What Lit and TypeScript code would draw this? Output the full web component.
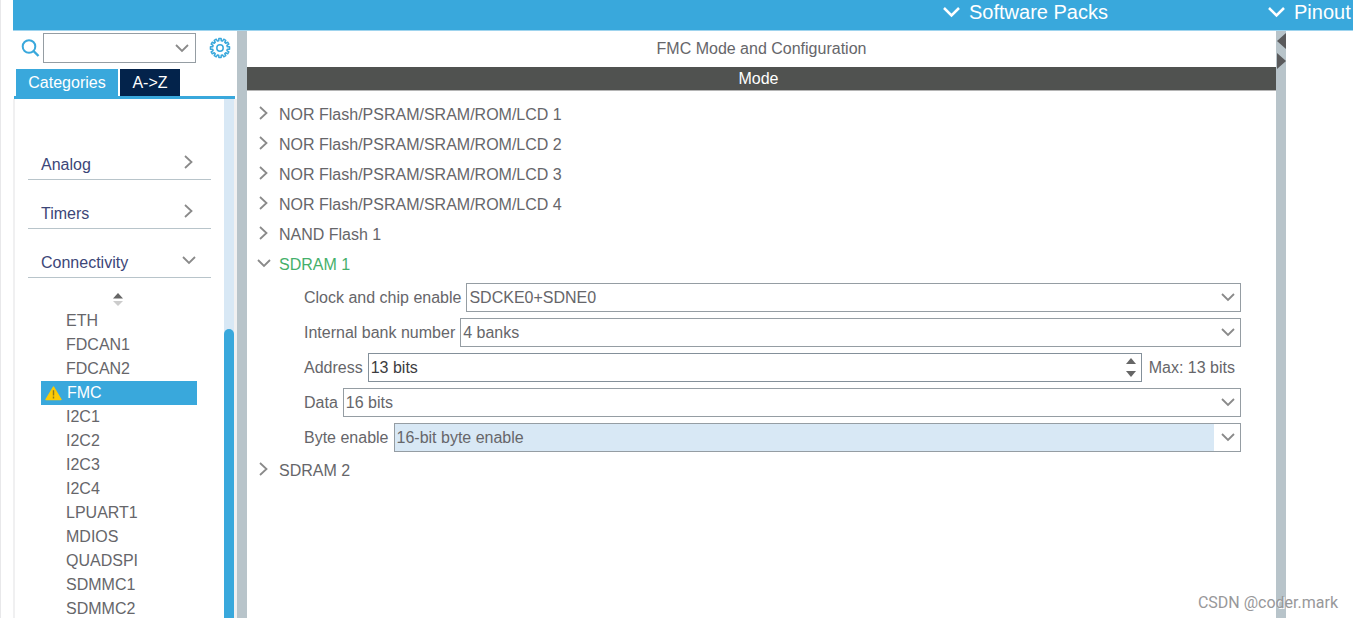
import { LitElement, html, css, svg, nothing } from "lit";
import { customElement, property } from "lit/decorators.js";
import { classMap } from "lit/directives/class-map.js";

type Direction = "right" | "down";

const chevron = (dir: Direction) => html`
  <svg class="chevron" width="14" height="14" viewBox="0 0 14 14" fill="none" stroke="currentColor" stroke-width="1.8" aria-hidden="true">
    ${dir === "right" ? svg`<path d="M3 1 L9.5 7 L3 13" />` : svg`<path d="M1 4 L7 10 L13 4" />`}
  </svg>
`;

const gearOutline = (): string => {
  const teeth = 12;
  const points: string[] = [];
  for (let i = 0; i < teeth; i++) {
    const mid = (i * 2 * Math.PI) / teeth;
    const corners: [number, number][] = [[7.4, -0.17], [9.6, -0.12], [9.6, 0.12], [7.4, 0.17]];
    for (const [r, offset] of corners) {
      points.push(`${(11 + r * Math.cos(mid + offset)).toFixed(2)} ${(11 + r * Math.sin(mid + offset)).toFixed(2)}`);
    }
  }
  return `M${points.join("L")}Z`;
};

@customElement("combo-field")
export class ComboField extends LitElement {
  @property() label = "";
  @property() value = "";
  @property({ type: Boolean }) highlighted = false;

  static styles = css`
    :host { display: block; }
    .row { display: flex; align-items: center; gap: 5px; }
    .box { position: relative; flex: 1; min-width: 0; color: #8a8a8a; }
    select {
      appearance: none;
      display: block;
      box-sizing: border-box;
      width: 100%;
      height: 29px;
      margin: 0;
      padding: 0 28px 0 2px;
      border: 1px solid #959da3;
      border-radius: 0;
      background: #fff;
      color: #66666a;
      font: inherit;
      outline: none;
    }
    .highlighted select { background: linear-gradient(to left, #fff 26px, #d8e8f5 26px); }
    .chevron { position: absolute; right: 6px; top: 7px; pointer-events: none; }
  `;

  render() {
    return html`
      <div class="row">
        <label for="field">${this.label}</label>
        <div class=${classMap({ box: true, highlighted: this.highlighted })}>
          <select id="field"><option>${this.value}</option></select>
          ${chevron("down")}
        </div>
      </div>
    `;
  }
}

@customElement("spin-field")
export class SpinField extends LitElement {
  @property() label = "";
  @property() value = "";
  @property() hint = "";

  static styles = css`
    :host { display: block; }
    .row { display: flex; align-items: center; gap: 5px; }
    .box {
      display: flex;
      flex: 1;
      min-width: 0;
      box-sizing: border-box;
      height: 29px;
      border: 1px solid #84909a;
      background: #fff;
    }
    input {
      flex: 1;
      min-width: 0;
      margin: 0;
      padding: 0 2px;
      border: 0;
      background: none;
      color: #3c3c40;
      font: inherit;
      outline: none;
    }
    .steps { display: flex; flex-direction: column; width: 20px; }
    button {
      display: flex;
      flex: 1;
      align-items: center;
      justify-content: center;
      padding: 0;
      border: 0;
      background: none;
      color: #666;
    }
    .hint { padding: 0 6px 0 2px; }
  `;

  render() {
    return html`
      <div class="row">
        <label for="field">${this.label}</label>
        <div class="box">
          <input id="field" type="text" .value=${this.value} />
          <div class="steps">
            <button type="button" aria-label="Increase">
              <svg width="10" height="6" viewBox="0 0 10 6" fill="currentColor"><path d="M0 6L5 0L10 6Z" /></svg>
            </button>
            <button type="button" aria-label="Decrease">
              <svg width="10" height="6" viewBox="0 0 10 6" fill="currentColor"><path d="M0 0L10 0L5 6Z" /></svg>
            </button>
          </div>
        </div>
        <span class="hint">${this.hint}</span>
      </div>
    `;
  }
}

@customElement("app-root")
export class AppRoot extends LitElement {
  private groups: { name: string; open: boolean }[] = [
    { name: "Analog", open: false },
    { name: "Timers", open: false },
    { name: "Connectivity", open: true },
  ];

  private peripherals = [
    "ETH", "FDCAN1", "FDCAN2", "FMC", "I2C1", "I2C2", "I2C3", "I2C4",
    "LPUART1", "MDIOS", "QUADSPI", "SDMMC1", "SDMMC2",
  ];

  private banks = [
    "NOR Flash/PSRAM/SRAM/ROM/LCD 1",
    "NOR Flash/PSRAM/SRAM/ROM/LCD 2",
    "NOR Flash/PSRAM/SRAM/ROM/LCD 3",
    "NOR Flash/PSRAM/SRAM/ROM/LCD 4",
    "NAND Flash 1",
  ];

  static styles = css`
    :host {
      display: flex;
      flex-direction: column;
      position: relative;
      box-sizing: border-box;
      height: 100vh;
      overflow: hidden;
      border-left: 1px solid #e8e8ea;
      padding-left: 12px;
      background: #fff;
      color: #66666a;
      font: 16px/20px "Liberation Sans", Arial, sans-serif;
    }
    button { margin: 0; padding: 0; border: 0; background: none; color: inherit; font: inherit; text-align: left; }

    .toolbar {
      display: flex;
      flex: none;
      justify-content: flex-end;
      height: 31px;
      background: #39a8dc;
      border-bottom: 1px solid #9fd4ee;
      box-sizing: border-box;
      color: #fff;
      overflow: hidden;
    }
    .toolbar button {
      display: flex;
      align-items: center;
      gap: 9px;
      height: 24px;
      font-size: 20px;
      line-height: 24px;
      white-space: nowrap;
    }
    .packs { width: 325px; }
    .pinout { width: 85px; }

    .body { display: flex; flex: 1; min-height: 0; }
    .sidebar { display: flex; flex-direction: column; flex: none; width: 224px; }
    .search { display: flex; align-items: center; height: 30px; padding: 2px 6px 6px 8px; }
    .search label { display: flex; width: 22px; }
    .finder { position: relative; width: 153px; color: #8a8a8a; }
    .finder input {
      display: block;
      box-sizing: border-box;
      width: 100%;
      height: 30px;
      padding: 0 30px 0 4px;
      border: 1px solid #959da3;
      font: inherit;
      outline: none;
    }
    .finder button { position: absolute; right: 7px; top: 8px; display: flex; color: inherit; }
    .gear { display: flex; margin-left: auto; color: #39a8dc; }

    .tabs { display: flex; gap: 2px; margin: 0 2px 0 1px; padding-left: 2px; border-bottom: 3px solid #39a8dc; }
    .tabs button { height: 27px; background: #03234b; color: #fff; text-align: center; width: 60px; }
    .tabs .current { background: #39a8dc; width: 102px; }

    .panel { display: flex; flex: 1; min-height: 0; border-left: 2px solid #f0f0f1; border-right: 3px solid #f0f0f1; overflow: hidden; }
    .groups { flex: 1; padding: 32px 13px 0; }
    .group {
      display: flex;
      align-items: flex-end;
      justify-content: space-between;
      box-sizing: border-box;
      width: 100%;
      height: 49px;
      padding: 0 15px 4px 13px;
      border-bottom: 1px solid #b8c4ca;
      color: #3c4678;
    }
    .group .chevron { margin-bottom: 6px; color: #8a8a8a; }
    .sort { display: flex; width: 10px; margin: 15px 0 3px 85px; }
    ul { margin: 0; padding: 0 14px 0 13px; list-style: none; }
    .item { display: flex; align-items: center; width: 100%; height: 24px; padding-left: 25px; }
    .item.selected { gap: 5px; padding-left: 4px; background: #39a8dc; color: #fff; }
    .track { flex: none; width: 10px; background: #d8e8f5; padding-top: 230px; }
    .thumb { height: 100%; border-radius: 5px 5px 0 0; background: #39a8dc; }

    .divider { flex: none; box-sizing: border-box; width: 10px; background: #b8c4ca; }
    .arrows { display: flex; flex-direction: column; gap: 4px; padding: 2px 0 0 1px; color: #5a5a5c; }
    main { flex: 1; min-width: 0; }
    h1, h2 { margin: 0; font: inherit; text-align: center; }
    h1 { padding: 8px 0; }
    h2 { padding: 2px 6px 1px 0; background: #505250; border-bottom: 1px solid #b5b5b5; color: #fff; }
    .tree { padding: 9px 35px 0 10px; }
    .node { display: flex; align-items: center; gap: 8px; height: 30px; color: inherit; }
    .node .chevron { margin-bottom: 4px; color: #8a8a8a; }
    .node.active { color: #45b06b; }
    .fields { display: flex; flex-direction: column; gap: 6px; padding: 3px 0 4px 47px; }
    .canvas { flex: none; width: 67px; }
    .watermark {
      position: absolute;
      right: 15px;
      bottom: 5px;
      color: #98989a;
      font-family: Roboto, "Liberation Sans", sans-serif;
      text-shadow: 1px 1px 0 #fff;
    }
  `;

  private renderPeripheral(name: string) {
    const selected = name === "FMC";
    return html`
      <li>
        <button type="button" class=${classMap({ item: true, selected })}>
          ${selected
            ? html`<svg width="17" height="16" viewBox="0 0 17 16" aria-hidden="true">
                <path d="M8.5 2L16 14.5H1Z" fill="#fccb05" stroke="#fccb05" stroke-width="1.4" stroke-linejoin="round" />
                <path d="M8.5 5.2V10.4M8.5 11.6V13.4" stroke="#8d7a1c" stroke-width="1.4" />
              </svg>`
            : nothing}${name}
        </button>
      </li>
    `;
  }

  private renderNode(name: string, dir: Direction = "right", active = false) {
    return html`<button type="button" class=${classMap({ node: true, active })}>${chevron(dir)}${name}</button>`;
  }

  private boldChevron() {
    return html`<svg width="17" height="12" viewBox="0 0 17 12" fill="none" stroke="currentColor" stroke-width="2.5" aria-hidden="true">
      <path d="M1 2L8.5 9.5L16 2" />
    </svg>`;
  }

  render() {
    return html`
      <header class="toolbar">
        <button type="button" class="packs">${this.boldChevron()}Software Packs</button>
        <button type="button" class="pinout">${this.boldChevron()}Pinout</button>
      </header>
      <div class="body">
        <aside class="sidebar">
          <div class="search">
            <label for="finder" aria-label="Search">
              <svg width="19" height="19" viewBox="0 0 19 19" fill="none" stroke="#39a8dc" aria-hidden="true">
                <circle cx="8" cy="7.5" r="6.3" stroke-width="2" />
                <path d="M12.5 12L17.5 17" stroke-width="2.4" />
              </svg>
            </label>
            <div class="finder">
              <input id="finder" type="text" />
              <button type="button" aria-label="Show recent searches">${chevron("down")}</button>
            </div>
            <button type="button" class="gear" aria-label="Settings">
              <svg width="22" height="22" viewBox="0 0 22 22" fill="none" stroke="currentColor" stroke-width="1.5" stroke-linejoin="round">
                <path d=${gearOutline()} />
                <circle cx="11" cy="11" r="3.2" />
              </svg>
            </button>
          </div>
          <div class="tabs" role="tablist">
            <button type="button" role="tab" class="current" aria-selected="true">Categories</button>
            <button type="button" role="tab" aria-selected="false">A-&gt;Z</button>
          </div>
          <div class="panel">
            <div class="groups">
              ${this.groups.map(
                (g) => html`<button type="button" class="group">${g.name}${chevron(g.open ? "down" : "right")}</button>`
              )}
              <button type="button" class="sort" aria-label="Sort">
                <svg width="10" height="13" viewBox="0 0 10 13">
                  <path d="M0 5.5L5 0L10 5.5Z" fill="#666" />
                  <path d="M0 8L10 8L5 13Z" fill="#ccc" />
                </svg>
              </button>
              <ul>${this.peripherals.map((p) => this.renderPeripheral(p))}</ul>
            </div>
            <div class="track"><div class="thumb"></div></div>
          </div>
        </aside>
        <div class="divider"></div>
        <main>
          <h1>FMC Mode and Configuration</h1>
          <h2>Mode</h2>
          <div class="tree">
            ${this.banks.map((b) => this.renderNode(b))}
            ${this.renderNode("SDRAM 1", "down", true)}
            <div class="fields">
              <combo-field label="Clock and chip enable" value="SDCKE0+SDNE0"></combo-field>
              <combo-field label="Internal bank number" value="4 banks"></combo-field>
              <spin-field label="Address" value="13 bits" hint="Max: 13 bits"></spin-field>
              <combo-field label="Data" value="16 bits"></combo-field>
              <combo-field label="Byte enable" value="16-bit byte enable" highlighted></combo-field>
            </div>
            ${this.renderNode("SDRAM 2")}
          </div>
        </main>
        <div class="divider arrows">
          <svg width="9" height="16" viewBox="0 0 9 16" fill="currentColor"><path d="M9 0V16L0 8Z" /></svg>
          <svg width="9" height="16" viewBox="0 0 9 16" fill="currentColor"><path d="M0 0L9 8L0 16Z" /></svg>
        </div>
        <div class="canvas"></div>
      </div>
      <div class="watermark">CSDN @coder.mark</div>
    `;
  }
}
